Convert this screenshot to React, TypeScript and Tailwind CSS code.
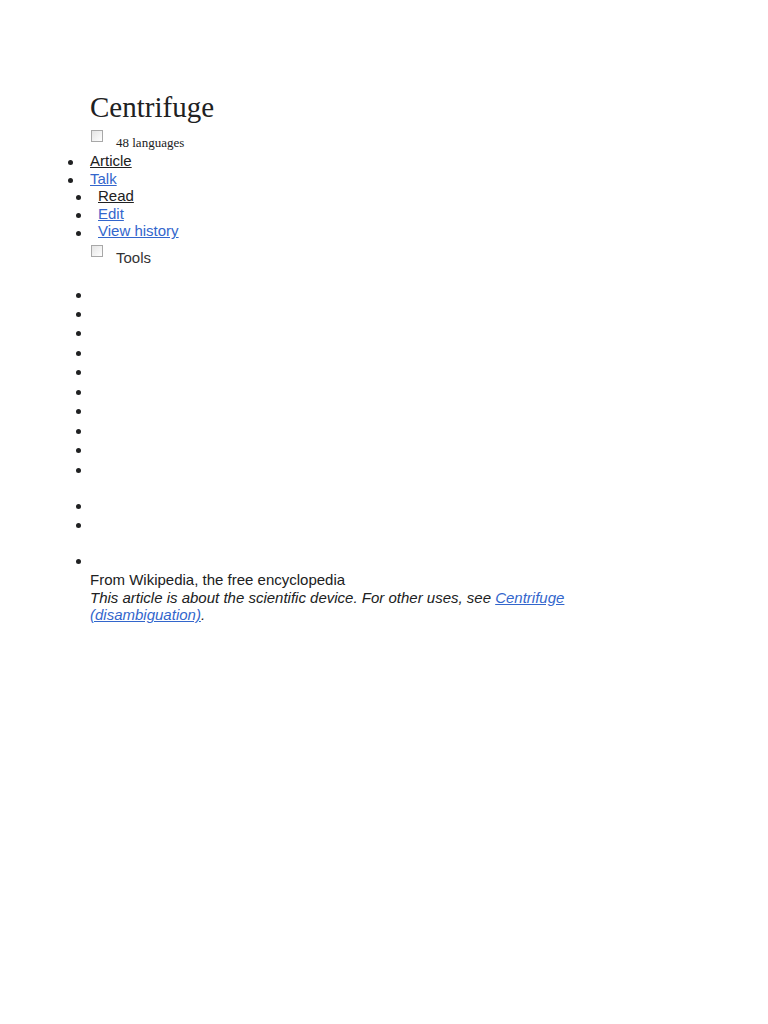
import React from 'react';

const sans = { fontFamily: '"Liberation Sans", Arial, sans-serif' };
const serif = { fontFamily: '"Liberation Serif", "Times New Roman", serif' };

const Box: React.FC<{ className?: string }> = ({ className = '' }) => (
    <span className={`block w-[12px] h-[12px] border border-[#a8a8a8] bg-linear-to-br from-[#e4e4e4] to-white ${className}`} />
);

// bullet rows, drawn by hand so the dot sits where the unstyled page puts it
const Item: React.FC<{ nested?: boolean; children?: React.ReactNode; className?: string; dot?: string }> = ({ nested, children, className = '', dot = 'mt-[8.2px]' }) => (
    <li className={`flex items-start ${nested ? 'pl-[76px]' : 'pl-[68px]'} ${className}`}>
        <span className={`w-[5px] h-[5px] rounded-full bg-[#202122] shrink-0 mr-[17px] ${dot}`} />
        {children}
    </li>
);

const EmptyList: React.FC<{ count: number; className?: string }> = ({ count, className = '' }) => (
    <ul className={className}>
        {Array.from({ length: count }).map((_, i) => (
            <Item key={i} nested className="h-[19.44px]" dot="mt-[7px]" />
        ))}
    </ul>
);

export default function App() {
    return (
        <div className="min-h-[1024px] bg-white text-[#202122] pt-[90px]" style={sans}>
            <h1 className="pl-[90px] text-[29px] leading-[34px] font-normal" style={serif}>
                Centrifuge
            </h1>

            <div className="flex items-start pl-[91px] h-[28px]">
                <Box className="mt-[6px]" />
                <span className="ml-[13px] mt-[11px] text-[13px] leading-[15px]" style={serif}>
                    48 languages
                </span>
            </div>

            <ul className="text-[15px] leading-[17.6px]">
                <Item><a href="#" className="underline text-[#202122]">Article</a></Item>
                <Item><a href="#" className="underline text-[#3366cc]">Talk</a></Item>
                <Item nested><a href="#" className="underline text-[#202122]">Read</a></Item>
                <Item nested><a href="#" className="underline text-[#3366cc]">Edit</a></Item>
                <Item nested><a href="#" className="underline text-[#3366cc]">View history</a></Item>
            </ul>

            <div className="flex items-start pl-[91px] h-[27px]">
                <Box className="mt-[5.2px]" />
                <span className="ml-[13px] mt-[8.7px] text-[15px] leading-[normal] text-[#333]">Tools</span>
            </div>

            <div className="text-[15px]">
                <EmptyList count={10} className="mt-[18.6px]" />
                <EmptyList count={2} className="mt-[16.6px]" />
                <EmptyList count={1} className="mt-[16.1px]" />
            </div>

            <div className="pl-[90px] pr-[190px] text-[15px] leading-[17.6px]">
                <div>From Wikipedia, the free encyclopedia</div>
                <div className="italic">
                    This article is about the scientific device. For other uses, see{' '}
                    <a href="#" className="underline text-[#3366cc]">Centrifuge (disambiguation)</a>.
                </div>
            </div>
        </div>
    );
}
